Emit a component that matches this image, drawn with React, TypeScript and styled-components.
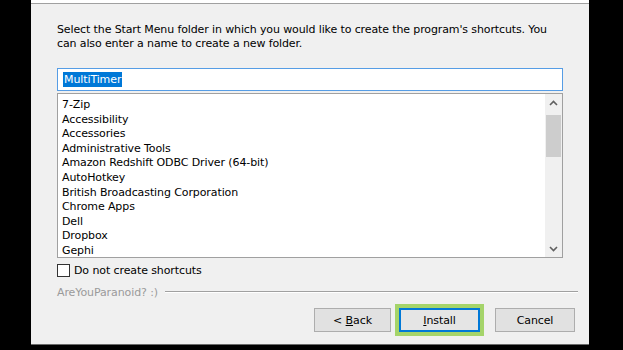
import styled, { createGlobalStyle } from 'styled-components';

const folders = [
  '7-Zip',
  'Accessibility',
  'Accessories',
  'Administrative Tools',
  'Amazon Redshift ODBC Driver (64-bit)',
  'AutoHotkey',
  'British Broadcasting Corporation',
  'Chrome Apps',
  'Dell',
  'Dropbox',
  'Gephi',
];

function Chevron({ up }: { up?: boolean }) {
  return (
    <svg width="9" height="6" viewBox="0 0 9 6">
      <path
        d={up ? 'M1 5 L4.5 1.5 L8 5' : 'M1 1 L4.5 4.5 L8 1'}
        fill="none"
        stroke="#606060"
        strokeWidth="1.6"
      />
    </svg>
  );
}

export default function App() {
  return (
    <>
      <GlobalStyle />
      <Dialog>
        <HeaderEdge />
        <Content>
          <Description>
            Select the Start Menu folder in which you would like to create the program&apos;s shortcuts. You
            <br />
            can also enter a name to create a new folder.
          </Description>
          <NameField>
            <Selected>MultiTimer</Selected>
          </NameField>
          <FolderList>
            <Items>
              {folders.map((name) => (
                <Item key={name}>{name}</Item>
              ))}
            </Items>
            <ScrollBar>
              <ArrowButton><Chevron up /></ArrowButton>
              <Thumb />
              <Track />
              <ArrowButton><Chevron /></ArrowButton>
            </ScrollBar>
          </FolderList>
          <CheckRow>
            <CheckBox />
            <span>Do not create shortcuts</span>
          </CheckRow>
        </Content>
        <Branding>
          <span>AreYouParanoid? :)</span>
          <BrandLine />
        </Branding>
        <ButtonRow>
          <Button><span>&lt; <u>B</u>ack</span></Button>
          <Button $primary>
            <span><u>I</u>nstall</span>
          </Button>
          <Button><span>Cancel</span></Button>
        </ButtonRow>
      </Dialog>
    </>
  );
}

const GlobalStyle = createGlobalStyle`
  html, body {
    margin: 0;
    padding: 0;
    background: #000;
  }
  body {
    width: 623px;
    height: 350px;
    overflow: hidden;
    font-family: "DejaVu Sans", Tahoma, sans-serif;
    font-size: 11px;
    letter-spacing: -0.1px;
    color: #000;
  }
`;

const Dialog = styled.div`
  display: flex;
  flex-direction: column;
  margin-left: 31px;
  width: 558px;
  height: 345px;
  box-sizing: border-box;
  background: #f0f0f0;
  border-bottom: 1px solid #6a6a6a;
`;

const HeaderEdge = styled.div`
  height: 3px;
  background: #fff;
  border-bottom: 1px solid #a0a0a0;
`;

const Content = styled.div`
  display: flex;
  flex-direction: column;
  padding: 19px 26px 0 26px;
`;

const Description = styled.p`
  margin: 0;
  line-height: 14px;
  white-space: nowrap;
  letter-spacing: -0.12px;
`;

const NameField = styled.div`
  display: flex;
  align-items: center;
  margin-top: 17px;
  height: 23px;
  box-sizing: border-box;
  padding: 0 5px;
  background: #fff;
  border: 1px solid #569de5;
`;

const Selected = styled.span`
  background: #0078d7;
  color: #fff;
  line-height: 15px;
  padding: 0 1px;
`;

const FolderList = styled.div`
  display: flex;
  margin-top: 2px;
  height: 165px;
  box-sizing: border-box;
  background: #fff;
  border: 1px solid #a0a0a0;
`;

const Items = styled.div`
  flex: 1;
  padding: 4px 0 0 4px;
  overflow: hidden;
`;

const Item = styled.div`
  line-height: 14.6px;
  white-space: nowrap;
`;

const ScrollBar = styled.div`
  display: flex;
  flex-direction: column;
  width: 17px;
  background: #f0f0f0;
`;

const ArrowButton = styled.div`
  display: flex;
  align-items: center;
  justify-content: center;
  height: 17px;
`;

const Thumb = styled.div`
  margin: 4px 1px 0 1px;
  height: 42px;
  background: #cdcdcd;
`;

const Track = styled.div`
  flex: 1;
`;

const CheckRow = styled.div`
  display: flex;
  align-items: center;
  gap: 4px;
  margin-top: 5px;
  height: 14px;
`;

const CheckBox = styled.div`
  width: 13px;
  height: 13px;
  box-sizing: border-box;
  background: #fff;
  border: 1px solid #333;
`;

const Branding = styled.div`
  display: flex;
  align-items: center;
  gap: 7px;
  margin-top: 8px;
  padding: 0 11px 0 26px;
  height: 14px;
  color: #9a9a9a;
`;

const BrandLine = styled.div`
  flex: 1;
  border-top: 1px solid #a0a0a0;
  border-bottom: 1px solid #fff;
`;

const ButtonRow = styled.div`
  display: flex;
  justify-content: flex-end;
  margin-top: 9px;
  padding-right: 14px;
`;

const Button = styled.div<{ $primary?: boolean }>`
  display: flex;
  align-items: center;
  justify-content: center;
  height: 24px;
  box-sizing: border-box;
  width: ${({ $primary }) => ($primary ? '81px' : '80px')};
  margin-left: ${({ $primary }) => ($primary ? '8px' : '15px')};
  background: ${({ $primary }) => ($primary ? '#e5e5e5' : '#e1e1e1')};
  border: ${({ $primary }) => ($primary ? '2px solid #0078d7' : '1px solid #adadad')};
  outline: ${({ $primary }) => ($primary ? '4px solid #a5d46a' : 'none')};

  &:first-child {
    margin-left: 0;
    width: 77px;
  }

  u {
    text-underline-offset: 1px;
  }
`;
